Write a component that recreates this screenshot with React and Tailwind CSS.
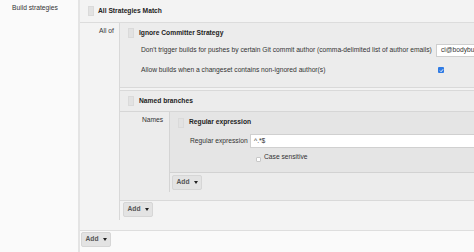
import React from 'react';

const Handle = ({ className = '' }) => (
    <div className={`w-[6px] h-[10px] bg-[#e2e2e2] border border-[#dadada] ${className}`} />
);

const AddButton = ({ className = '' }) => (
    <button className={`h-[15px] w-[30px] flex items-center justify-center gap-[4px] rounded-[2px] bg-[#e3e3e3] border border-[#d6d6d6] text-[#555] font-bold text-[6.7px] ${className}`}>
        <span>Add</span>
        <span className="w-0 h-0 border-l-[2.5px] border-r-[2.5px] border-t-[3px] border-l-transparent border-r-transparent border-t-[#222]" />
    </button>
);

const App = () => {
    return (
        <div
            className="w-[474px] h-[252px] overflow-hidden flex bg-[#fafafa] text-[6.7px] text-[#333]"
            style={{ fontFamily: '"Liberation Sans", Arial, sans-serif' }}
        >
            {/* left label column */}
            <div className="w-[80px] shrink-0 border-r-[2px] border-[#e4e4e4] pl-[12px] pt-[3px]">
                Build strategies
            </div>

            <div className="w-[560px] shrink-0 flex flex-col">
                {/* All Strategies Match */}
                <div className="h-[231px] bg-[#f3f3f3] border-b border-[#dedede] flex flex-col">
                    <div className="h-[23px] shrink-0 flex items-center pl-[8px] border-b border-[#dcdcdc]">
                        <Handle className="mr-[4px]" />
                        <span className="font-bold text-[#222]">All Strategies Match</span>
                    </div>
                    <div className="flex">
                        <div className="w-[39px] shrink-0 pl-[19px] pt-[3px]">All of</div>
                        <div className="flex-1 min-w-0 border-l border-[#d8d8d8] h-[197px] flex flex-col">
                            {/* Ignore Committer Strategy */}
                            <div className="h-[65px] shrink-0 bg-[#ececec] border-b border-[#d9d9d9]">
                                <div className="h-[20px] flex items-center pl-[8px]">
                                    <Handle className="mr-[5px]" />
                                    <span className="font-bold text-[#222]">Ignore Committer Strategy</span>
                                </div>
                                <div className="h-[15px] flex items-center pl-[21px]">
                                    <span className="w-[295px] shrink-0 whitespace-nowrap">
                                        Don't trigger builds for pushes by certain Git commit author (comma-delimited list of author emails)
                                    </span>
                                    <div className="h-[13px] w-[120px] shrink-0 bg-white border border-[#cfcfcf] flex items-center pl-[4px] whitespace-nowrap overflow-hidden">
                                        ci@bodybuilding.com
                                    </div>
                                </div>
                                <div className="h-[24px] flex items-center pl-[21px]">
                                    <span className="w-[297px] shrink-0 whitespace-nowrap">
                                        Allow builds when a changeset contains non-ignored author(s)
                                    </span>
                                    <span className="w-[6px] h-[6px] rounded-[1px] bg-[#2f7be4] flex items-center justify-center">
                                        <svg width="5" height="5" viewBox="0 0 10 10">
                                            <path d="M2 5.2 L4.2 7.4 L8.2 2.6" fill="none" stroke="#fff" strokeWidth="1.8" />
                                        </svg>
                                    </span>
                                </div>
                            </div>

                            {/* Named branches */}
                            <div className="h-[111px] shrink-0 mt-[2px] bg-[#ececec] border-t border-b border-[#d9d9d9] flex flex-col">
                                <div className="h-[21px] shrink-0 flex items-center pl-[8px] border-b border-[#d6d6d6]">
                                    <Handle className="mr-[5px]" />
                                    <span className="font-bold text-[#222]">Named branches</span>
                                </div>
                                <div className="flex">
                                    <div className="w-[49px] shrink-0 pl-[22px] pt-[3px]">Names</div>
                                    <div className="flex-1 min-w-0 border-l border-[#d4d4d4] h-[80px] flex flex-col">
                                        {/* Regular expression */}
                                        <div className="h-[61px] shrink-0 bg-[#e5e5e5] border-b border-[#d2d2d2]">
                                            <div className="h-[21px] flex items-center pl-[8px]">
                                                <Handle className="mr-[5px]" />
                                                <span className="font-bold text-[#222]">Regular expression</span>
                                            </div>
                                            <div className="h-[16px] flex items-center pl-[20px]">
                                                <span className="w-[60px] shrink-0">Regular expression</span>
                                                <div className="h-[14px] w-[300px] shrink-0 bg-white border border-[#d0d0d0] flex items-center pl-[3px]">
                                                    ^.*$
                                                </div>
                                            </div>
                                            <div className="h-[17px] flex items-center pl-[86px] gap-[3px]">
                                                <span className="w-[5px] h-[5px] mt-[4px] bg-white border border-[#c8c8c8] rounded-[1px]" />
                                                <span>Case sensitive</span>
                                            </div>
                                        </div>
                                        <AddButton className="mt-[2px] ml-[2px]" />
                                    </div>
                                </div>
                            </div>

                            <AddButton className="mt-[1px] ml-[3px]" />
                        </div>
                    </div>
                </div>

                <AddButton className="mt-[1px] ml-[1px]" />
            </div>
        </div>
    );
};

export default App;
